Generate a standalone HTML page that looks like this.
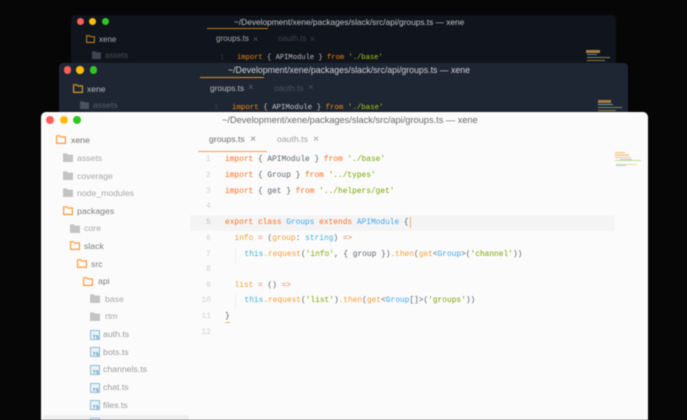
<!DOCTYPE html>
<html><head><meta charset="utf-8">
<style>
html,body{margin:0;padding:0;width:687px;height:420px;overflow:hidden;background:#060606}
#r{position:absolute;left:0;top:0;width:687px;height:420px;overflow:hidden;filter:blur(.45px)}
.w,.a,.t,.l{position:absolute}
.w{overflow:hidden;border-radius:4px 4px 0 0}
.t{font:8.7px/12px "Liberation Sans",sans-serif;white-space:pre}
.l{font:7.85px/12px "Liberation Mono",monospace;white-space:pre;color:#5a646e}
.d{border-radius:50%;position:absolute;width:8px;height:8px}
.k{color:#f9701f}.s{color:#79a800}.b{color:#3fa5ee}.f{color:#f2a136}.h{color:#3fb2d4}.o{color:#f0804f}
.n{color:#cfd1d3}
svg{position:absolute;overflow:visible}
</style></head><body>
<svg width="0" height="0" style="position:absolute"><defs>
<symbol id="open" viewBox="0 0 10 9"><path d="M.6 8.4V.8h3.2l1 1.2h4.6v6.400z" fill="none" stroke="currentColor" stroke-width="1.2"/></symbol>
<symbol id="closed" viewBox="0 0 10 9"><path d="M0 9V.4h3.800l1 1.2H10V9z" fill="currentColor"/></symbol>
<symbol id="ts" viewBox="0 0 10 10"><rect x=".5" y=".5" width="9" height="9" fill="#e9f2f7" stroke="#8fbdd6"/><path d="M3 5.500h2.400M4.200 5.500v3M8.200 5.600H6.600v1.300h1.500v1.500H6.400" fill="none" stroke="#5f9cc0" stroke-width=".8"/></symbol>
</defs></svg>
<div id="r">

<!-- BACK WINDOW -->
<div class="w" style="left:71px;top:15px;width:545px;height:60px;background:#10141c"></div>
<div class="d" style="left:76.500px;top:18px;width:7px;height:7px;background:#f9605a"></div>
<div class="d" style="left:89px;top:18px;width:7px;height:7px;background:#fdbb10"></div>
<div class="d" style="left:101.500px;top:18px;width:7px;height:7px;background:#33c525"></div>
<div class="t" style="left:234px;top:16px;color:#bfc2c6;font-size:8.340px">~/Development/xene/packages/slack/src/api/groups.ts — xene</div>
<div class="a" style="left:207px;top:28px;width:61px;height:1px;background:#bd7d14"></div>
<svg style="left:86px;top:35px;color:#c17a12" width="9" height="8"><use href="#open" width="9" height="8"/></svg>
<div class="t" style="left:99px;top:34px;color:#a9abae;font-size:8px">xene</div>
<svg style="left:92px;top:51px;color:#3d4552" width="9" height="8"><use href="#closed" width="9" height="8"/></svg>
<div class="t" style="left:105px;top:50px;color:#454c58;font-size:8px">assets</div>
<div class="t" style="left:216px;top:33px;color:#a5a8ac;font-size:8px">groups.ts</div>
<div class="t" style="left:253px;top:33px;color:#545a64;font-size:9px">×</div>
<div class="t" style="left:278px;top:33px;color:#3c4350;font-size:8px">oauth.ts</div>
<div class="t" style="left:310px;top:33px;color:#3c4350;font-size:9px">×</div>
<div class="l" style="left:220px;top:52px;color:#2f3540;font-size:7px">1</div>
<div class="l" style="left:237px;top:52px;font-size:7.150px;color:#bcbfc2"><span style="color:#ec860f">import</span> { APIModule } <span style="color:#ec860f">from</span> <span style="color:#a5cc10">'./base'</span></div>
<div class="a" style="left:586px;top:50px;width:14px;height:3px;background:#a87b40"></div>
<div class="a" style="left:587px;top:54px;width:10px;height:1px;background:#5a8ca8"></div>
<div class="a" style="left:587px;top:57px;width:23px;height:1px;background:#7c8a60"></div>
<div class="a" style="left:587px;top:60px;width:18px;height:1px;background:#8a7a50"></div>

<!-- MIDDLE WINDOW -->
<div class="w" style="left:59px;top:63px;width:569px;height:60px;background:#1f2633"></div>
<div class="d" style="left:63.500px;top:66px;width:7.500px;height:7.500px;background:#f9605a"></div>
<div class="d" style="left:76px;top:66px;width:7.500px;height:7.500px;background:#fdbb10"></div>
<div class="d" style="left:89.500px;top:66px;width:7.500px;height:7.500px;background:#33c525"></div>
<div class="t" style="left:228px;top:64px;color:#cfd1d5;font-size:8.750px">~/Development/xene/packages/slack/src/api/groups.ts — xene</div>
<div class="a" style="left:200px;top:76.500px;width:64px;height:1px;background:#d19a1e"></div>
<svg style="left:73px;top:84px;color:#d19a1e" width="10" height="9"><use href="#open" width="10" height="9"/></svg>
<div class="t" style="left:87px;top:83px;color:#b8babd;font-size:8.500px">xene</div>
<svg style="left:80px;top:101px;color:#4a5361" width="9" height="8"><use href="#closed" width="9" height="8"/></svg>
<div class="t" style="left:93px;top:99px;color:#565e6b;font-size:8.500px">assets</div>
<div class="t" style="left:210px;top:82px;color:#b8bbbf;font-size:8.300px">groups.ts</div>
<div class="t" style="left:248px;top:82px;color:#5d6470;font-size:9.500px">×</div>
<div class="t" style="left:274px;top:82px;color:#4b5361;font-size:8.300px">oauth.ts</div>
<div class="t" style="left:308px;top:82px;color:#4b5361;font-size:9.500px">×</div>
<div class="l" style="left:214px;top:101.500px;color:#3b4350;font-size:7.500px">1</div>
<div class="l" style="left:232px;top:101.500px;font-size:7.430px;color:#c6c9cc"><span style="color:#f08c0f">import</span> { APIModule } <span style="color:#f08c0f">from</span> <span style="color:#a5cc10">'./base'</span></div>
<div class="a" style="left:598px;top:100px;width:13px;height:3px;background:#a87b40"></div>
<div class="a" style="left:598px;top:104px;width:15px;height:1px;background:#6aa0c0"></div>
<div class="a" style="left:598px;top:107px;width:24px;height:1px;background:#7c8a60"></div>
<div class="a" style="left:598px;top:110px;width:18px;height:1px;background:#8a7a50"></div>

<!-- FRONT WINDOW -->
<div class="w" style="left:41px;top:112px;width:607px;height:308px;background:#fbfbfb;border-radius:5px 5px 0 0"></div>
<div class="a" style="left:43px;top:415px;width:146px;height:5px;background:#efefef"></div>
<div class="a" style="left:190px;top:215px;width:425px;height:16px;background:#f4f4f4"></div>
<div class="d" style="left:46px;top:116px;background:#fb5e57"></div>
<div class="d" style="left:59.500px;top:116px;background:#fdbc11"></div>
<div class="d" style="left:73px;top:116px;background:#2fc81f"></div>
<div class="t" style="left:222px;top:114px;color:#6a6a6a;font-size:9.250px">~/Development/xene/packages/slack/src/api/groups.ts — xene</div>

<div class="a" style="left:198px;top:150.500px;width:69px;height:1px;background:#fa9f48"></div>
<div class="t" style="left:209px;top:133px;color:#6e6e6e">groups.ts</div>
<div class="t" style="left:250px;top:133px;color:#888;font-size:10.500px">×</div>
<div class="t" style="left:277px;top:133px;color:#a0a0a0">oauth.ts</div>
<div class="t" style="left:313px;top:133px;color:#a0a0a0;font-size:10.500px">×</div>

<!-- sidebar -->
<svg style="left:56px;top:135px;color:#fb9c3a" width="10" height="9"><use href="#open" width="10" height="9"/></svg>
<div class="t" style="left:71px;top:134px;color:#707070">xene</div>
<svg style="left:63px;top:153px;color:#c4c4c4" width="10" height="9"><use href="#closed" width="10" height="9"/></svg>
<div class="t" style="left:77px;top:152px;color:#a8a8a8">assets</div>
<svg style="left:63px;top:171px;color:#c4c4c4" width="10" height="9"><use href="#closed" width="10" height="9"/></svg>
<div class="t" style="left:77px;top:170px;color:#a8a8a8">coverage</div>
<svg style="left:63px;top:188px;color:#c4c4c4" width="10" height="9"><use href="#closed" width="10" height="9"/></svg>
<div class="t" style="left:77px;top:187px;color:#a8a8a8">node_modules</div>
<svg style="left:63px;top:206px;color:#fb9c3a" width="10" height="9"><use href="#open" width="10" height="9"/></svg>
<div class="t" style="left:77px;top:205px;color:#7e7e7e">packages</div>
<svg style="left:70px;top:224px;color:#c4c4c4" width="10" height="9"><use href="#closed" width="10" height="9"/></svg>
<div class="t" style="left:84px;top:222px;color:#a8a8a8">core</div>
<svg style="left:70px;top:241px;color:#fb9c3a" width="10" height="9"><use href="#open" width="10" height="9"/></svg>
<div class="t" style="left:84px;top:240px;color:#7e7e7e">slack</div>
<svg style="left:77px;top:259px;color:#fb9c3a" width="10" height="9"><use href="#open" width="10" height="9"/></svg>
<div class="t" style="left:91px;top:258px;color:#7e7e7e">src</div>
<svg style="left:83px;top:277px;color:#fb9c3a" width="10" height="9"><use href="#open" width="10" height="9"/></svg>
<div class="t" style="left:98px;top:275px;color:#7e7e7e">api</div>
<svg style="left:90px;top:294px;color:#c4c4c4" width="10" height="9"><use href="#closed" width="10" height="9"/></svg>
<div class="t" style="left:105px;top:293px;color:#a8a8a8">base</div>
<svg style="left:90px;top:312px;color:#c4c4c4" width="10" height="9"><use href="#closed" width="10" height="9"/></svg>
<div class="t" style="left:105px;top:310px;color:#a8a8a8">rtm</div>
<svg style="left:90px;top:330px" width="10" height="10"><use href="#ts" width="10" height="10"/></svg>
<div class="t" style="left:103px;top:328px;color:#9c9c9c">auth.ts</div>
<svg style="left:90px;top:347px" width="10" height="10"><use href="#ts" width="10" height="10"/></svg>
<div class="t" style="left:103px;top:346px;color:#9c9c9c">bots.ts</div>
<svg style="left:90px;top:365px" width="10" height="10"><use href="#ts" width="10" height="10"/></svg>
<div class="t" style="left:103px;top:363px;color:#9c9c9c">channels.ts</div>
<svg style="left:90px;top:383px" width="10" height="10"><use href="#ts" width="10" height="10"/></svg>
<div class="t" style="left:103px;top:381px;color:#9c9c9c">chat.ts</div>
<svg style="left:90px;top:400px" width="10" height="10"><use href="#ts" width="10" height="10"/></svg>
<div class="t" style="left:103px;top:399px;color:#9c9c9c">files.ts</div>
<svg style="left:90px;top:418px" width="10" height="10"><use href="#ts" width="10" height="10"/></svg>

<!-- gutter -->
<div class="l n" style="left:206px;top:154px">1</div>
<div class="l n" style="left:206px;top:170px">2</div>
<div class="l n" style="left:206px;top:186px">3</div>
<div class="l n" style="left:206px;top:201px">4</div>
<div class="l n" style="left:206px;top:217px;color:#c0c2c4">5</div>
<div class="l n" style="left:206px;top:233px">6</div>
<div class="l n" style="left:206px;top:249px">7</div>
<div class="l n" style="left:206px;top:264px">8</div>
<div class="l n" style="left:206px;top:280px">9</div>
<div class="l n" style="left:201.500px;top:295px">10</div>
<div class="l n" style="left:201.500px;top:311px">11</div>
<div class="l n" style="left:201.500px;top:327px">12</div>

<!-- indent guides -->
<div class="a" style="left:235px;top:247px;width:1px;height:16px;background:#f1f1f1"></div>
<div class="a" style="left:235px;top:294px;width:1px;height:16px;background:#f1f1f1"></div>

<!-- code -->
<div class="l" style="left:225px;top:154px"><span class="k">import</span> { APIModule } <span class="k">from</span> <span class="s">'./base'</span></div>
<div class="l" style="left:225px;top:170px"><span class="k">import</span> { Group } <span class="k">from</span> <span class="s">'../types'</span></div>
<div class="l" style="left:225px;top:186px"><span class="k">import</span> { get } <span class="k">from</span> <span class="s">'../helpers/get'</span></div>
<div class="l" style="left:225px;top:217px"><span class="k">export class</span> <span class="b">Groups</span> <span class="k">extends</span> <span class="b">APIModule</span> {</div>
<div class="a" style="left:410px;top:217px;width:1px;height:11px;background:#f5b26b"></div>
<div class="l" style="left:234.500px;top:233px"><span class="f">info</span> <span class="o">=</span> (<span class="f">group</span>: <span class="h">string</span>) <span class="o">=&gt;</span></div>
<div class="l" style="left:244.500px;top:249px"><span class="h">this</span><span class="f">.request</span>(<span class="s">'info'</span>, { group })<span class="f">.then</span>(<span class="f">get</span>&lt;<span class="b">Group</span>&gt;(<span class="s">'channel'</span>))</div>
<div class="l" style="left:234.500px;top:280px"><span class="f">list</span> <span class="o">=</span> () <span class="o">=&gt;</span></div>
<div class="l" style="left:244.500px;top:295px"><span class="h">this</span><span class="f">.request</span>(<span class="s">'list'</span>)<span class="f">.then</span>(<span class="f">get</span>&lt;<span class="b">Group</span>[]&gt;(<span class="s">'groups'</span>))</div>
<div class="l" style="left:225px;top:311px">}</div>
<div class="a" style="left:225px;top:322px;width:5px;height:1px;background:#f5b26b"></div>

<!-- minimap -->
<div class="a" style="left:615px;top:152px;width:10px;height:1px;background:#f5b98a"></div>
<div class="a" style="left:615px;top:153.500px;width:14px;height:2px;background:#e8d79a"></div>
<div class="a" style="left:615px;top:157px;width:16px;height:1px;background:#f5c39a"></div>
<div class="a" style="left:620px;top:158.500px;width:12px;height:1px;background:#a8d3ee"></div>
<div class="a" style="left:615px;top:160px;width:26px;height:1px;background:#c9dc9a"></div>
<div class="a" style="left:616px;top:163.500px;width:21px;height:1px;background:#f0d89a"></div>
<div class="a" style="left:616px;top:165px;width:10px;height:1px;background:#a8d3ee"></div>

</div>
</body></html>
